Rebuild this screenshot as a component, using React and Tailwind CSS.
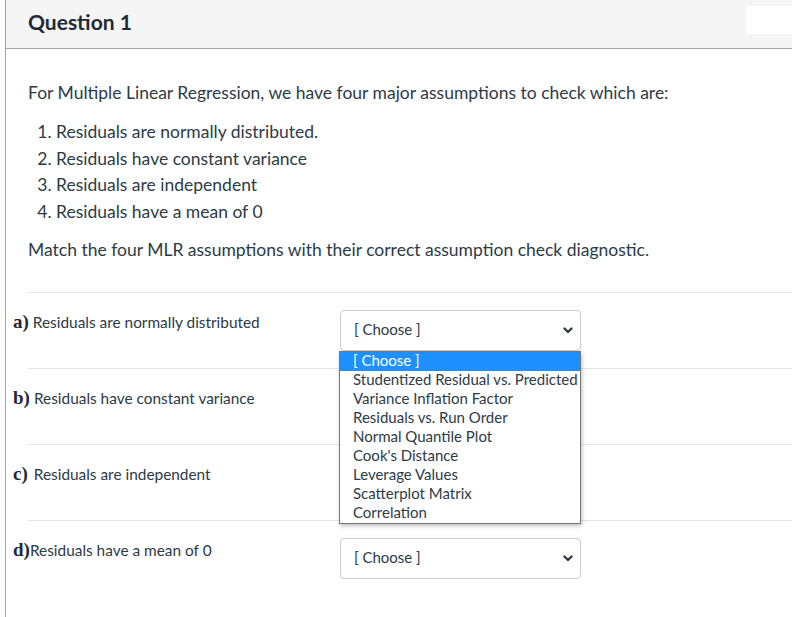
import React from 'react';

const options = [
  'Studentized Residual vs. Predicted',
  'Variance Inflation Factor',
  'Residuals vs. Run Order',
  'Normal Quantile Plot',
  "Cook's Distance",
  'Leverage Values',
  'Scatterplot Matrix',
  'Correlation',
];

const answers = [
  { letter: 'a)', text: 'Residuals are normally distributed', gap: 'ml-[4px]' },
  { letter: 'b)', text: 'Residuals have constant variance', gap: 'ml-[4px]' },
  { letter: 'c)', text: 'Residuals are independent', gap: 'ml-[6px]' },
  { letter: 'd)', text: 'Residuals have a mean of 0', gap: 'ml-0' },
];

const Chevron = () => (
  <svg width="10" height="7" viewBox="0 0 10 7" fill="none">
    <path d="M1.5 1.5 L5 5 L8.5 1.5" stroke="#2d3b45" strokeWidth="2.4" strokeLinecap="round" strokeLinejoin="round" />
  </svg>
);

// closed select box; the ones under the open list show no label
const Select = ({ showLabel = true }) => (
  <div className="w-[241px] h-[41px] shrink-0 rounded-[4px] border border-[#c7cdd1] bg-white flex items-center justify-between pl-[13px] pr-[7px] text-[15px] text-[#2d3b45]">
    <span className="pb-[4px]">{showLabel ? '[ Choose ]' : ''}</span>
    <Chevron />
  </div>
);

// open list under the first select
const OptionList = () => (
  <div className="absolute left-[-1px] top-[41px] w-[242px] z-10 bg-white border border-[#767676] shadow-[1px_2px_4px_rgba(0,0,0,0.25)] text-[15px] text-[#2d3b45]">
    <div className="h-[19px] leading-[16px] bg-[#1e90ff] text-white pl-[13px]">[ Choose ]</div>
    {options.map((o) => (
      <div key={o} className="h-[19px] leading-[16px] pl-[13px] whitespace-nowrap">{o}</div>
    ))}
  </div>
);

export default function App() {
  return (
    <div className="h-[617px] overflow-hidden bg-white" style={{ fontFamily: 'Lato, "Noto Sans", sans-serif' }}>
      <div className="ml-[5px] h-full border-l border-[#a5a5a5]">
        {/* Header */}
        <div className="h-[49px] bg-[#f5f5f5] border-b border-[#a5a5a5] flex items-start justify-between">
          <h2 className="pl-[22px] pt-[8px] text-[21px] leading-[28px] font-bold text-[#1f2a33]">Question 1</h2>
          <div className="mt-[6px] w-[46px] h-[28px] bg-white" />
        </div>

        {/* Body */}
        <div className="pl-[22px] text-[#2d3b45]">
          <p className="pt-[32px] text-[17.5px] leading-[24px]">
            For Multiple Linear Regression, we have four major assumptions to check which are:
          </p>
          <ol className="mt-[14px] list-decimal pl-[28px] text-[17.5px] leading-[26.6px]">
            <li>Residuals are normally distributed.</li>
            <li>Residuals have constant variance</li>
            <li>Residuals are independent</li>
            <li>Residuals have a mean of 0</li>
          </ol>
          <p className="mt-[13px] text-[17.5px] leading-[24px]">
            Match the four MLR assumptions with their correct assumption check diagnostic.
          </p>

          {/* Answer rows */}
          <div className="mt-[30px]">
            {answers.map((a, i) => (
              <div key={a.letter} className="border-t border-[#e2e4e6] h-[76px] pt-[17px] flex items-start">
                <div className="w-[327px] -ml-[15px] pt-[1px] flex items-baseline text-[15.4px] text-[#2d3b45]">
                  <span className="font-bold text-[19px] leading-[22px] text-[#1f2a33]" style={{ fontFamily: '"Liberation Serif", serif' }}>
                    {a.letter}
                  </span>
                  <span className={a.gap}>{a.text}</span>
                </div>
                <div className="relative">
                  <Select showLabel={i === 0 || i === 3} />
                  {i === 0 && <OptionList />}
                </div>
              </div>
            ))}
          </div>
        </div>
      </div>
    </div>
  );
}
